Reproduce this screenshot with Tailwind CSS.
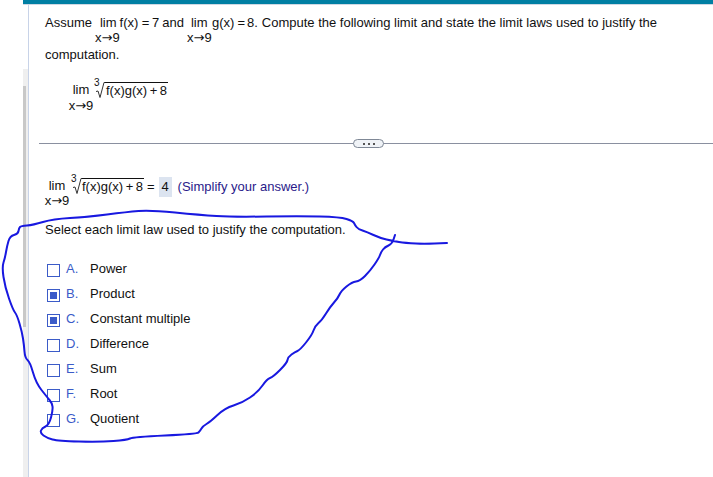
<!DOCTYPE html>
<html lang="en">
  <head>
    <meta charset="UTF-8" />
    <title>Limit laws</title>
    <script src="https://cdn.jsdelivr.net/npm/@tailwindcss/browser@4"></script>
  </head>
  <body class="relative h-[477px] w-[713px] overflow-hidden bg-white font-['Liberation_Sans',Arial,sans-serif] text-[13px] leading-[15px] text-[#111]">
    <!-- page frame -->
    <div class="ml-[23px] flex h-[477px] flex-col">
      <div class="h-1 bg-[#007fa3]"></div>
      <div class="h-px bg-[#cfd8e3]"></div>
      <div class="flex flex-1">
        <!-- scrollbar rail -->
        <div class="mt-[64px] w-[5px] bg-[#efefef]">
          <div class="mt-[17px] h-[241px] w-[3px] bg-[#c8c8c8]"></div>
        </div>
        <div class="w-px bg-[#c8d3e8]"></div>

        <main class="flex-1 pl-4 pt-[9px]">
          <!-- question -->
          <div class="flex h-4 items-end whitespace-nowrap">
            <span>Assume</span>
            <span class="ml-2">lim</span>
            <span class="ml-[3px]">f(x)</span>
            <span class="ml-[3.5px]">=</span>
            <span class="ml-[2.5px]">7</span>
            <span class="ml-[3px]">and</span>
            <span class="ml-[7px]">lim</span>
            <span class="ml-[4.5px]">g(x)</span>
            <span class="ml-[3px]">=</span>
            <span class="ml-[2px]">8.</span>
            <span class="ml-1">Compute the following limit and state the limit laws used to justify the</span>
          </div>
          <div class="flex h-4 leading-4">
            <span class="ml-[50px] w-[92px]">x<span class="font-['DejaVu_Sans']">→</span>9</span>
            <span>x<span class="font-['DejaVu_Sans']">→</span>9</span>
          </div>
          <p class="mt-px">computation.</p>

          <div class="mt-5 ml-[23px] flex items-start">
            <div class="flex w-[26px] flex-col items-center">
              <span>lim</span>
              <span class="mt-[2px] whitespace-nowrap leading-[13px]">x<span class="font-['DejaVu_Sans']">→</span>9</span>
            </div>
            <span class="relative flex">
              <span class="absolute left-0 -top-[4px] text-[10px] leading-[10px]">3</span>
              <svg class="absolute left-[2px] top-0" width="9" height="17" viewBox="0 0 9 17"><path d="M0 9.5 L2 9 L4 15.5 L8 0.5 H9" fill="none" stroke="#333" stroke-width="1"/></svg>
              <span class="ml-[11px] flex w-[63px] whitespace-nowrap border-t border-[#111] pl-px leading-[15px]">f(x)g(x)<span class="ml-[2.5px]">+</span><span class="ml-[2.5px]">8</span></span>
            </span>
          </div>

          <!-- divider -->
          <div class="relative mt-[31px] ml-[-6px] h-px bg-[#8a90a0]">
            <div class="absolute left-[314px] -top-[4px] flex h-[9px] w-[31px] items-center justify-center gap-[3px] rounded-full border border-[#7f8896] bg-[#f0f3f7]">
              <span class="size-[2px] bg-[#555]"></span>
              <span class="size-[2px] bg-[#555]"></span>
              <span class="size-[2px] bg-[#555]"></span>
            </div>
          </div>

          <!-- answer -->
          <div class="mt-[34px] flex items-start">
            <div class="flex w-6 flex-col items-center">
              <span>lim</span>
              <span class="mt-px whitespace-nowrap leading-[13px]">x<span class="font-['DejaVu_Sans']">→</span>9</span>
            </div>
            <span class="relative ml-[2px] flex">
              <span class="absolute left-0 -top-[4px] text-[10px] leading-[10px]">3</span>
              <svg class="absolute left-[2px] top-0" width="9" height="17" viewBox="0 0 9 17"><path d="M0 9.5 L2 9 L4 15.5 L8 0.5 H9" fill="none" stroke="#333" stroke-width="1"/></svg>
              <span class="ml-[11px] flex w-[62px] whitespace-nowrap border-t border-[#111] leading-[15px]">f(x)g(x)<span class="ml-[2.5px]">+</span><span class="ml-[2.5px]">8</span></span>
            </span>
            <span class="ml-[3px] mt-px">=</span>
            <span class="ml-1 -mt-px h-5 w-[13px] bg-[#dce4f0] text-center leading-5">4</span>
            <span class="ml-[6px] mt-px text-[#2a1a8a]">(Simplify your answer.)</span>
          </div>

          <p class="mt-[15px]">Select each limit law used to justify the computation.</p>

          <!-- choices -->
          <ul class="mt-[26px] ml-[2px] flex flex-col gap-[10px]">
            <li class="flex h-[15px] items-center">
              <span class="size-[13px] border border-[#3b5bc8]"></span>
              <span class="ml-[6px] -mt-1 w-[24px] text-[#3b5bc8]">A.</span><span class="-mt-1">Power</span>
            </li>
            <li class="flex h-[15px] items-center">
              <span class="flex size-[13px] items-center justify-center border border-[#3b5bc8]"><span class="size-[7px] bg-[#3b5bc8]"></span></span>
              <span class="ml-[6px] -mt-1 w-[24px] text-[#3b5bc8]">B.</span><span class="-mt-1">Product</span>
            </li>
            <li class="flex h-[15px] items-center">
              <span class="flex size-[13px] items-center justify-center border border-[#3b5bc8]"><span class="size-[7px] bg-[#3b5bc8]"></span></span>
              <span class="ml-[6px] -mt-1 w-[24px] text-[#3b5bc8]">C.</span><span class="-mt-1">Constant multiple</span>
            </li>
            <li class="flex h-[15px] items-center">
              <span class="size-[13px] border border-[#3b5bc8]"></span>
              <span class="ml-[6px] -mt-1 w-[24px] text-[#3b5bc8]">D.</span><span class="-mt-1">Difference</span>
            </li>
            <li class="flex h-[15px] items-center">
              <span class="size-[13px] border border-[#3b5bc8]"></span>
              <span class="ml-[6px] -mt-1 w-[24px] text-[#3b5bc8]">E.</span><span class="-mt-1">Sum</span>
            </li>
            <li class="flex h-[15px] items-center">
              <span class="size-[13px] border border-[#3b5bc8]"></span>
              <span class="ml-[6px] -mt-1 w-[24px] text-[#3b5bc8]">F.</span><span class="-mt-1">Root</span>
            </li>
            <li class="flex h-[15px] items-center">
              <span class="size-[13px] border border-[#3b5bc8]"></span>
              <span class="ml-[6px] -mt-1 w-[24px] text-[#3b5bc8]">G.</span><span class="-mt-1">Quotient</span>
            </li>
          </ul>
        </main>
      </div>
    </div>

    <!-- pen annotation drawn over the page -->
    <svg class="absolute left-0 top-0" width="713" height="477" viewBox="0 0 713 477">
      <path id="pen" fill="none" stroke="#1818e0" stroke-width="2" stroke-linejoin="round" stroke-linecap="round" />
    </svg>
    <script>
      // pen samples read off the screenshot, smoothed with midpoint curves
      const pts = [[447,243],[427,244],[405,243],[393,241],[380,238],[367,232],[358,229],[355,225],[353,221],[340,217],[300,216],[233,217],[200,215],[150,210],[127,212],[87,217],[53,219],[33,225],[21,226],[19,228],[18,234],[10,236],[7,246],[5,258],[2,267],[5,287],[13,310],[17,315],[22,332],[24,345],[25,358],[30,362],[36,383],[47,397],[52,403],[53,410],[49,425],[42,428],[40,433],[47,438],[58,441],[100,442],[127,440],[133,437],[197,434],[200,431],[203,426],[210,422],[225,408],[242,403],[258,392],[267,379],[273,377],[287,363],[288,357],[295,352],[300,350],[312,335],[315,326],[322,320],[330,307],[338,298],[341,291],[352,282],[360,281],[370,271],[379,258],[381,252],[385,247],[392,244],[395,235]];
      let d = `M${pts[0][0]} ${pts[0][1]}`;
      for (let i = 1; i < pts.length - 1; i++) {
        const mx = (pts[i][0] + pts[i + 1][0]) / 2;
        const my = (pts[i][1] + pts[i + 1][1]) / 2;
        d += ` Q${pts[i][0]} ${pts[i][1]} ${mx} ${my}`;
      }
      d += ` L${pts[pts.length - 1][0]} ${pts[pts.length - 1][1]}`;
      document.getElementById("pen").setAttribute("d", d);
    </script>
  </body>
</html>
